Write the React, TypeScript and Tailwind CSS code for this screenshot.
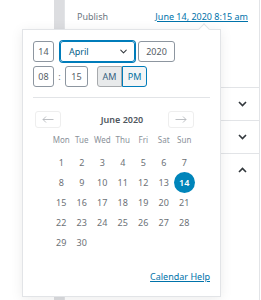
import { ChevronDown } from "lucide-react";

const weekdays = ["Mon", "Tue", "Wed", "Thu", "Fri", "Sat", "Sun"];
const days = Array.from({ length: 30 }, (_, i) => i + 1);

function Chevron({ up }: { up?: boolean }) {
  return (
    <svg width="9" height="6" viewBox="0 0 9 6" className={up ? "rotate-180" : ""}>
      <path d="M1 1l3.5 3.5L8 1" fill="none" stroke="#32373c" strokeWidth="1.6" />
    </svg>
  );
}

function Box({ w, children, className = "" }: { w: string; children: React.ReactNode; className?: string }) {
  return (
    <div
      className={`flex h-[21px] items-center justify-center rounded-[3px] border border-[#8d96a0] bg-white text-[#555d66] ${w} ${className}`}
    >
      {children}
    </div>
  );
}

export default function App() {
  return (
    <div className="relative h-[300px] w-[261px] overflow-hidden bg-white font-['Noto_Sans',sans-serif] text-[9px] leading-none">
      <div className="flex h-full">
        <div className="w-[54px]" />
        <div className="w-[10px] bg-[#dcdde0]" />
        {/* sidebar */}
        <aside className="w-[196px] border-x border-[#e2e4e7]">
          <div className="flex h-[87px] items-start justify-between pl-[12px] pr-[11px] pt-[12px]">
            <span className="text-[#6c7781]">Publish</span>
            <span className="text-[#0073aa] underline">June 14, 2020 8:15 am</span>
          </div>
          <div className="flex h-[33px] items-center justify-end border-t border-[#e2e4e7] pr-[12px]">
            <Chevron />
          </div>
          <div className="flex h-[33px] items-center justify-end border-t border-[#e2e4e7] pr-[12px]">
            <Chevron />
          </div>
          <div className="flex h-[33px] items-center justify-end border-t border-[#e2e4e7] pr-[12px]">
            <Chevron up />
          </div>
        </aside>
      </div>

      {/* popover */}
      <div className="absolute left-[22px] top-[29px] h-[268px] w-[199px] border border-[#e2e4e7] bg-white px-[10px] pt-[11px] shadow-[0_2px_12px_rgba(0,0,0,0.08)]">
        <div className="absolute -top-[5px] left-[177px] h-[8px] w-[8px] rotate-45 border-l border-t border-[#e2e4e7] bg-white" />
        <div className="flex">
          <Box w="w-[21px]">14</Box>
          <div className="ml-[6px] flex h-[21px] w-[75px] items-center justify-between rounded-[3px] border border-[#007cba] pl-[8px] pr-[5px] text-[#016087] shadow-[0_0_0_1px_#007cba]">
            <span>April</span>
            <ChevronDown size={11} strokeWidth={2.2} color="#32373c" />
          </div>
          <Box w="w-[37px]" className="ml-[3px]">
            2020
          </Box>
        </div>
        <div className="mt-[4px] flex">
          <Box w="w-[21px]">08</Box>
          <div className="flex w-[11px] items-center justify-center text-[#6c7781]">:</div>
          <Box w="w-[23px]">15</Box>
          <div className="ml-[9px] flex h-[21px]">
            <div className="flex w-[25px] items-center justify-center rounded-l-[3px] border border-[#a7aaad] bg-[#e8eaeb] text-[#35617f]">
              AM
            </div>
            <div className="flex w-[25px] items-center justify-center rounded-r-[3px] border border-[#007cba] bg-[#f3f5f6] text-[#0071a1]">
              PM
            </div>
          </div>
        </div>
        <div className="mt-[10px] border-t border-[#e2e4e7]" />

        {/* calendar */}
        <div className="mt-[13px] flex h-[17px] items-center pl-[2px] pr-[16px]">
          <div className="flex h-[17px] w-[26px] items-center justify-center rounded-[3px] border border-[#eeeeee]">
            <svg width="12" height="7" viewBox="0 0 12 7">
              <path d="M11.5 3.5H1M4 0.5L1 3.5l3 3" fill="none" stroke="#b5b9bd" strokeWidth="0.9" />
            </svg>
          </div>
          <div className="flex-1 pl-[15px] text-center font-semibold text-[#50575e]">June 2020</div>
          <div className="flex h-[17px] w-[26px] items-center justify-center rounded-[3px] border border-[#eeeeee]">
            <svg width="12" height="7" viewBox="0 0 12 7">
              <path d="M0.5 3.5H11M8 0.5l3 3-3 3" fill="none" stroke="#b5b9bd" strokeWidth="0.9" />
            </svg>
          </div>
        </div>
        <div className="ml-[18px] mt-[5px] grid w-[143.5px] grid-cols-7 text-[8px] text-[#8a9199]">
          {weekdays.map((d) => (
            <div key={d} className="flex h-[14px] items-center justify-center">
              {d}
            </div>
          ))}
        </div>
        <div className="ml-[18px] mt-[5px] grid w-[143.5px] grid-cols-7 text-[#6c7176]">
          {days.map((d) => (
            <div key={d} className="flex h-[20px] items-center justify-center">
              {d === 14 ? (
                <span className="flex h-[21px] w-[21px] items-center justify-center rounded-full bg-[#0085ba] font-semibold text-white">
                  {d}
                </span>
              ) : (
                d
              )}
            </div>
          ))}
        </div>
        <div className="mt-[20px] flex justify-end">
          <span className="text-[#0073aa] underline">Calendar Help</span>
        </div>
      </div>
    </div>
  );
}
